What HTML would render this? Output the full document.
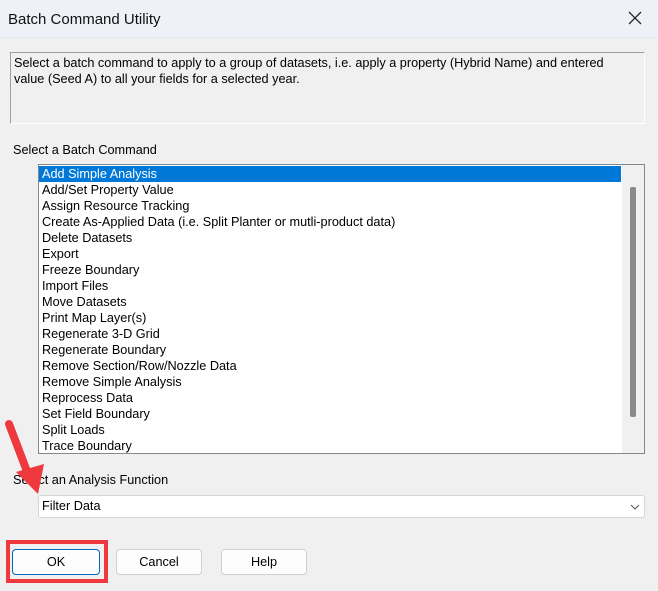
<!DOCTYPE html>
<html><head><style>
*{box-sizing:border-box;margin:0;padding:0}
body{width:658px;height:591px;background:#f0f0f0;font-family:"Liberation Sans",sans-serif;position:relative;overflow:hidden;font-size:12.7px;color:#000}
.title{position:absolute;left:0;top:0;width:658px;height:38px;background:#eef2f8;border-bottom:1px solid #e4e8ee}
.title span{position:absolute;left:8px;top:11px;font-size:15px;color:#111}
.x{position:absolute;right:16px;top:11px}
.desc{position:absolute;left:10px;top:52px;width:635px;height:72px;border:1px solid #a0a0a0;border-bottom-color:#fff;border-right-color:#fff;padding:2px 3px;line-height:16px}
.lbl{position:absolute;left:13px}
.list{position:absolute;left:38px;top:164px;width:607px;height:290px;border:1px solid #828790;background:#fff;overflow:hidden;padding-top:1px}
.it{height:16px;line-height:16px;padding-left:3px;width:582px;white-space:nowrap}
.sel{background:#0078d7;color:#fff}
.sb{position:absolute;right:0;top:0;width:22px;height:100%;background:#f0f0f0}
.thumb{position:absolute;left:8px;top:22px;width:6px;height:230px;background:#8a8a8a;border-radius:2px}
.combo{position:absolute;left:38px;top:495px;width:607px;height:23px;background:#fff;border:1px solid #d5d5d5;border-radius:3px;padding-left:3px;line-height:21px}
.btn{position:absolute;top:549px;height:26px;background:#fdfdfd;border:1px solid #d0d0d0;border-radius:4px;text-align:center;line-height:24px}
</style></head><body>
<div class="title"><span>Batch Command Utility</span>
<svg class="x" width="14" height="14" viewBox="0 0 14 14"><path d="M1 1L13 13M13 1L1 13" stroke="#222" stroke-width="1.3"/></svg></div>
<div class="desc">Select a batch command to apply to a group of datasets, i.e. apply a property (Hybrid Name) and entered<br>value (Seed A) to all your fields for a selected year.</div>
<div class="lbl" style="top:143px">Select a Batch Command</div>
<div class="list">
<div class="it sel">Add Simple Analysis</div>
<div class="it">Add/Set Property Value</div>
<div class="it">Assign Resource Tracking</div>
<div class="it">Create As-Applied Data (i.e. Split Planter or mutli-product data)</div>
<div class="it">Delete Datasets</div>
<div class="it">Export</div>
<div class="it">Freeze Boundary</div>
<div class="it">Import Files</div>
<div class="it">Move Datasets</div>
<div class="it">Print Map Layer(s)</div>
<div class="it">Regenerate 3-D Grid</div>
<div class="it">Regenerate Boundary</div>
<div class="it">Remove Section/Row/Nozzle Data</div>
<div class="it">Remove Simple Analysis</div>
<div class="it">Reprocess Data</div>
<div class="it">Set Field Boundary</div>
<div class="it">Split Loads</div>
<div class="it">Trace Boundary</div>
<div class="sb"><div class="thumb"></div></div>
</div>
<div class="lbl" style="top:473px">Select an Analysis Function</div>
<div class="combo">Filter Data
<svg style="position:absolute;right:4px;top:8px" width="10" height="6" viewBox="0 0 10 6"><path d="M1 1L5 5L9 1" stroke="#555" fill="none"/></svg></div>
<div class="btn" style="left:12px;width:88px;border:1px solid #0067c0">OK</div>
<div class="btn" style="left:116px;width:86px">Cancel</div>
<div class="btn" style="left:221px;width:86px">Help</div>
<div style="position:absolute;left:6px;top:540px;width:102px;height:43px;border:4px solid #ee3a3f"></div>
<svg style="position:absolute;left:0;top:410px" width="60" height="90" viewBox="0 0 60 90"><path d="M9 14L28 64" stroke="#ee3a3f" stroke-width="8" stroke-linecap="round"/><path d="M16 62L38 84L44 54Z" fill="#ee3a3f"/></svg>
</body></html>
